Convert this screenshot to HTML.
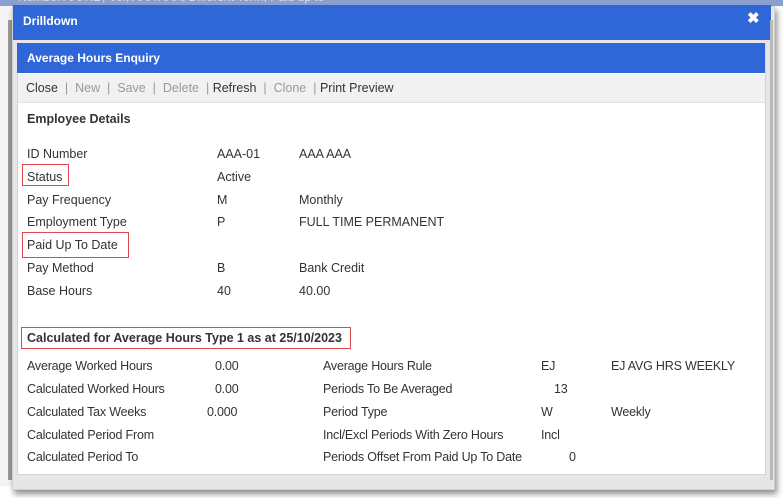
<!DOCTYPE html>
<html><head><style>
body{margin:0;width:783px;height:498px;overflow:hidden;background:#fff;font-family:"Liberation Sans",sans-serif;position:relative;color:#333;font-size:12.5px}
.a{position:absolute;white-space:nowrap}
.rb{position:absolute;border:1.5px solid #e0474c}
</style></head><body>
<div class="a" style="left:0;top:0;width:783px;height:6px;background:#8aa0cf"></div>
<div class="a" style="left:18px;top:-10px;color:#dde;font-size:12px">Number AAA ID, Ver, AAA AAA, Different Term, Paid up to</div>
<div class="a" style="left:0;top:6px;width:12px;height:480px;background:#f4f4f4"></div>
<div class="a" style="left:8px;top:20px;width:4px;height:460px;background:#9a9a9a"></div>
<div class="a" style="left:12px;top:6px;width:761px;height:482px;box-shadow:2px 4px 6px rgba(0,0,0,.45);background:#e6e6e6;border:1px solid #cfcfcf"></div>
<div class="a" style="left:13px;top:5px;width:758px;height:35px;background:#2f67d8"></div>
<div class="a" style="left:23px;top:14px;color:#fff;font-weight:bold;font-size:12px">Drilldown</div>
<div class="a" style="left:747px;top:9px;color:#fff;font-weight:bold;font-size:15px">✖</div>
<div class="a" style="left:770px;top:20px;width:3px;height:460px;background:#b8b8b8"></div>
<div class="a" style="left:17px;top:43px;width:747px;height:430px;background:#fff;border:1px solid #d4d4d4"></div>
<div class="a" style="left:17px;top:43px;width:748px;height:30px;background:#2f67d8"></div>
<div class="a" style="left:27px;top:51px;color:#fff;font-weight:bold;font-size:12px">Average Hours Enquiry</div>
<div class="a" style="left:18px;top:74px;width:747px;height:28px;background:#f0f1f0;border-bottom:1px solid #e2e2e2"></div>
<div class="a" style="left:26px;top:81px;font-size:12.5px;color:#333">Close <span style="color:#999">&nbsp;|&nbsp; New &nbsp;|&nbsp; Save &nbsp;|&nbsp; Delete &nbsp;|</span> Refresh <span style="color:#999">&nbsp;|&nbsp; Clone &nbsp;|</span> Print Preview</div>
<div class="a" style="left:27px;top:112px;font-weight:bold;font-size:12.5px">Employee Details</div>

<div class="a" style="left:27px;top:147px">ID Number</div><div class="a" style="left:217px;top:147px">AAA-01</div><div class="a" style="left:299px;top:147px">AAA AAA</div>
<div class="a" style="left:27px;top:170px">Status</div><div class="a" style="left:217px;top:170px">Active</div>
<div class="a" style="left:27px;top:193px">Pay Frequency</div><div class="a" style="left:217px;top:193px">M</div><div class="a" style="left:299px;top:193px">Monthly</div>
<div class="a" style="left:27px;top:215px">Employment Type</div><div class="a" style="left:217px;top:215px">P</div><div class="a" style="left:299px;top:215px">FULL TIME PERMANENT</div>
<div class="a" style="left:27px;top:238px">Paid Up To Date</div>
<div class="a" style="left:27px;top:261px">Pay Method</div><div class="a" style="left:217px;top:261px">B</div><div class="a" style="left:299px;top:261px">Bank Credit</div>
<div class="a" style="left:27px;top:284px">Base Hours</div><div class="a" style="left:217px;top:284px">40</div><div class="a" style="left:299px;top:284px">40.00</div>
<div class="rb" style="left:22px;top:164px;width:45px;height:20px"></div>
<div class="rb" style="left:22px;top:232px;width:105px;height:24px"></div>
<div class="rb" style="left:21px;top:327px;width:328px;height:20px"></div>
<div class="a" style="left:27px;top:331px;font-weight:bold">Calculated for Average Hours Type 1 as at 25/10/2023</div>

<div style="font-size:12.5px;letter-spacing:-0.2px">
<div class="a" style="left:27px;top:359px">Average Worked Hours</div><div class="a" style="left:215px;top:359px">0.00</div><div class="a" style="left:323px;top:359px">Average Hours Rule</div><div class="a" style="left:541px;top:359px">EJ</div><div class="a" style="left:611px;top:359px">EJ AVG HRS WEEKLY</div>
<div class="a" style="left:27px;top:382px">Calculated Worked Hours</div><div class="a" style="left:215px;top:382px">0.00</div><div class="a" style="left:323px;top:382px">Periods To Be Averaged</div><div class="a" style="left:554px;top:382px">13</div>
<div class="a" style="left:27px;top:405px">Calculated Tax Weeks</div><div class="a" style="left:207px;top:405px">0.000</div><div class="a" style="left:323px;top:405px">Period Type</div><div class="a" style="left:541px;top:405px">W</div><div class="a" style="left:611px;top:405px">Weekly</div>
<div class="a" style="left:27px;top:428px">Calculated Period From</div><div class="a" style="left:323px;top:428px">Incl/Excl Periods With Zero Hours</div><div class="a" style="left:541px;top:428px">Incl</div>
<div class="a" style="left:27px;top:450px">Calculated Period To</div><div class="a" style="left:323px;top:450px">Periods Offset From Paid Up To Date</div><div class="a" style="left:569px;top:450px">0</div>
</div>
</body></html>
